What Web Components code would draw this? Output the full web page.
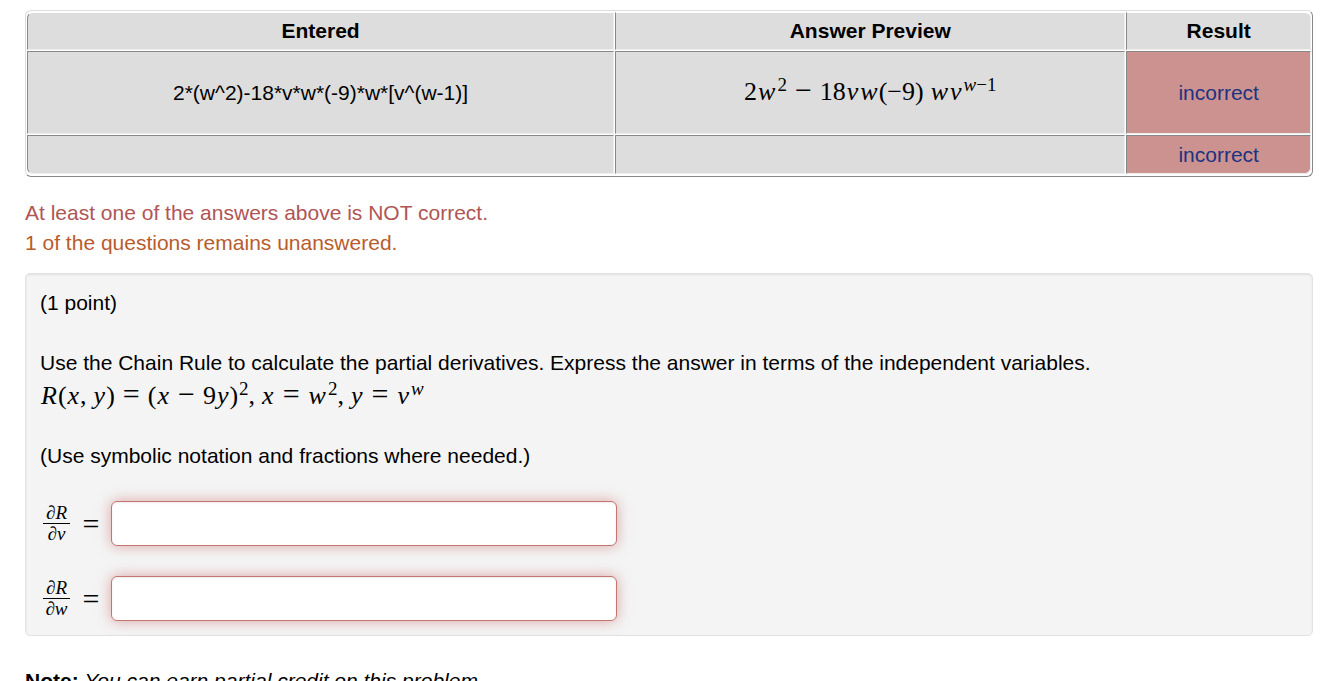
<!DOCTYPE html>
<html lang="en">
<head>
<meta charset="utf-8">
<title>Homework problem</title>
<style>
  html { overflow: hidden; background: #fff; }
  body { margin: 10px 24px 0 25px; font: 21px/30px "Liberation Sans", Arial, sans-serif; color: #000; }
</style>
</head>
<body>
<homework-page></homework-page>

<script>
class Base extends HTMLElement {
  constructor() {
    super();
    this.attachShadow({ mode: "open" }).innerHTML = this.constructor.markup;
  }
}

/* One line of mathematics: italic variables, raised exponents, spaced operators. */
class MathFormula extends Base {
  static markup = `
    <style>
      :host { display: inline-block; font-family: "Liberation Serif", "Times New Roman", serif; font-size: 26px; line-height: 30px; white-space: nowrap; }
      ::slotted(sup) { font-size: 19px; line-height: 0; vertical-align: 9px; margin-left: 1px; }
      ::slotted(b) { font-weight: normal; font-size: 30px; line-height: 0; margin: 0 8px; }
      ::slotted(i) { margin: 0 1px; }
      ::slotted(u) { text-decoration: none; margin-right: 6px; }
    </style><slot></slot>`;
}
customElements.define("math-formula", MathFormula);

class AnswerTable extends Base {
  static markup = `
    <style>
      :host { display: block; }
      table { box-sizing: border-box; width: 100%; table-layout: fixed; border-collapse: separate; border-spacing: 1px; padding-bottom: 1px;
        border: 1px solid; border-color: #ddd #888 #888 #ddd; border-radius: 6px; font: inherit; text-align: center; }
      th, td { box-sizing: border-box; height: 39px; padding: 3px; background: #ddd; border: 1px solid; border-color: #888 #eee #eee #888; vertical-align: middle; }
      th { height: 38px; border-top-color: #fff; font-weight: bold; }
      .tall td { height: 83px; }
      tr > .result { background: #cc9290; }
      tr > :first-child { width: 45.8%; }
      tr > :nth-child(2) { width: 39.8%; }
      th:first-child { border-top-left-radius: 6px; }
      th:last-child { border-top-right-radius: 6px; }
      tr:last-child td:first-child { border-bottom-left-radius: 6px; }
      tr:last-child td:last-child { border-bottom-right-radius: 6px; }
      a { color: #1b3380; text-decoration: none; }
    </style>
    <table>
      <thead><tr><th scope="col">Entered</th><th scope="col">Answer Preview</th><th scope="col">Result</th></tr></thead>
      <tbody>
        <tr class="tall">
          <td>2*(w^2)-18*v*w*(-9)*w*[v^(w-1)]</td>
          <td><math-formula>2<i>w</i><sup>2</sup><b>−</b>18<i>v</i><i>w</i>(−9<u>)</u><i>w</i><i>v</i><sup><i>w</i>−1</sup></math-formula></td>
          <td class="result"><a href="#answer-v">incorrect</a></td>
        </tr>
        <tr><td></td><td></td><td class="result"><a href="#answer-w">incorrect</a></td></tr>
      </tbody>
    </table>`;
}
customElements.define("answer-table", AnswerTable);

class ResultNotice extends Base {
  static markup = `
    <style>
      :host { display: block; color: #b05555; }
      :host([kind="unanswered"]) { color: #b85c2c; }
    </style><slot></slot>`;
}
customElements.define("result-notice", ResultNotice);

/* A partial derivative of R with an answer box beside it. */
class DerivativeField extends HTMLElement {
  connectedCallback() {
    const v = this.getAttribute("variable");
    this.attachShadow({ mode: "open" }).innerHTML = `
    <style>
      :host { display: flex; align-items: center; margin-top: 30px; }
      label { display: flex; align-items: center; font-family: "Liberation Serif", serif; font-size: 26px; }
      .fraction { display: flex; flex-direction: column; width: 27px; margin: 0 11px 0 3px; font-size: 19px; line-height: 20px; font-style: italic; text-align: center; }
      .top { border-bottom: 1px solid #000; }
      .equals { width: 20px; margin-right: 10px; text-align: center; font-size: 30px; }
      input { box-sizing: border-box; flex: 0 1 506px; min-width: 0; height: 45px; padding: 6px 9px; font: inherit; background: #fff;
        border: 1px solid #c47471; border-radius: 6px; box-shadow: inset 0 1px 2px rgba(0,0,0,.08), 0 0 14px rgba(196,100,96,.55); outline: none; }
    </style>
    <label for="answer"><span class="fraction"><span class="top">∂R</span><span>∂${v}</span></span><span class="equals">=</span></label>
    <input id="answer" type="text" autocomplete="off">`;
  }
}
customElements.define("derivative-field", DerivativeField);

class ProblemPanel extends Base {
  static markup = `
    <style>
      :host { display: block; padding: 14px; background: #f4f4f4; border: 1px solid #e2e2e2; border-radius: 5px; box-shadow: inset 0 1px 2px rgba(0,0,0,.08); }
      p { margin: 0 0 30px; }
      math-formula { display: block; padding-top: 3px; }
    </style>
    <p>(1 point)</p>
    <p>Use the Chain Rule to calculate the partial derivatives. Express the answer in terms of the independent variables.
      <math-formula><i>R</i>(<i>x</i><u>,</u><i>y</i>)<b>=</b>(<i>x</i><b>−</b>9<i>y</i>)<sup>2</sup><u>,</u><i>x</i><b>=</b><i>w</i><sup>2</sup><u>,</u><i>y</i><b>=</b><i>v</i><sup><i>w</i></sup></math-formula></p>
    <p>(Use symbolic notation and fractions where needed.)</p>
    <derivative-field id="answer-v" variable="v"></derivative-field>
    <derivative-field id="answer-w" variable="w"></derivative-field>`;
}
customElements.define("problem-panel", ProblemPanel);

class HomeworkPage extends Base {
  static markup = `
    <style>
      :host { display: block; }
      section { margin: 21px 0 15px; }
      p { margin: 30px 0 0; }
    </style>
    <answer-table></answer-table>
    <section>
      <result-notice>At least one of the answers above is NOT correct.</result-notice>
      <result-notice kind="unanswered">1 of the questions remains unanswered.</result-notice>
    </section>
    <problem-panel></problem-panel>
    <p><b>Note:</b> <i>You can earn partial credit on this problem.</i></p>`;
}
customElements.define("homework-page", HomeworkPage);
</script>
</body>
</html>
